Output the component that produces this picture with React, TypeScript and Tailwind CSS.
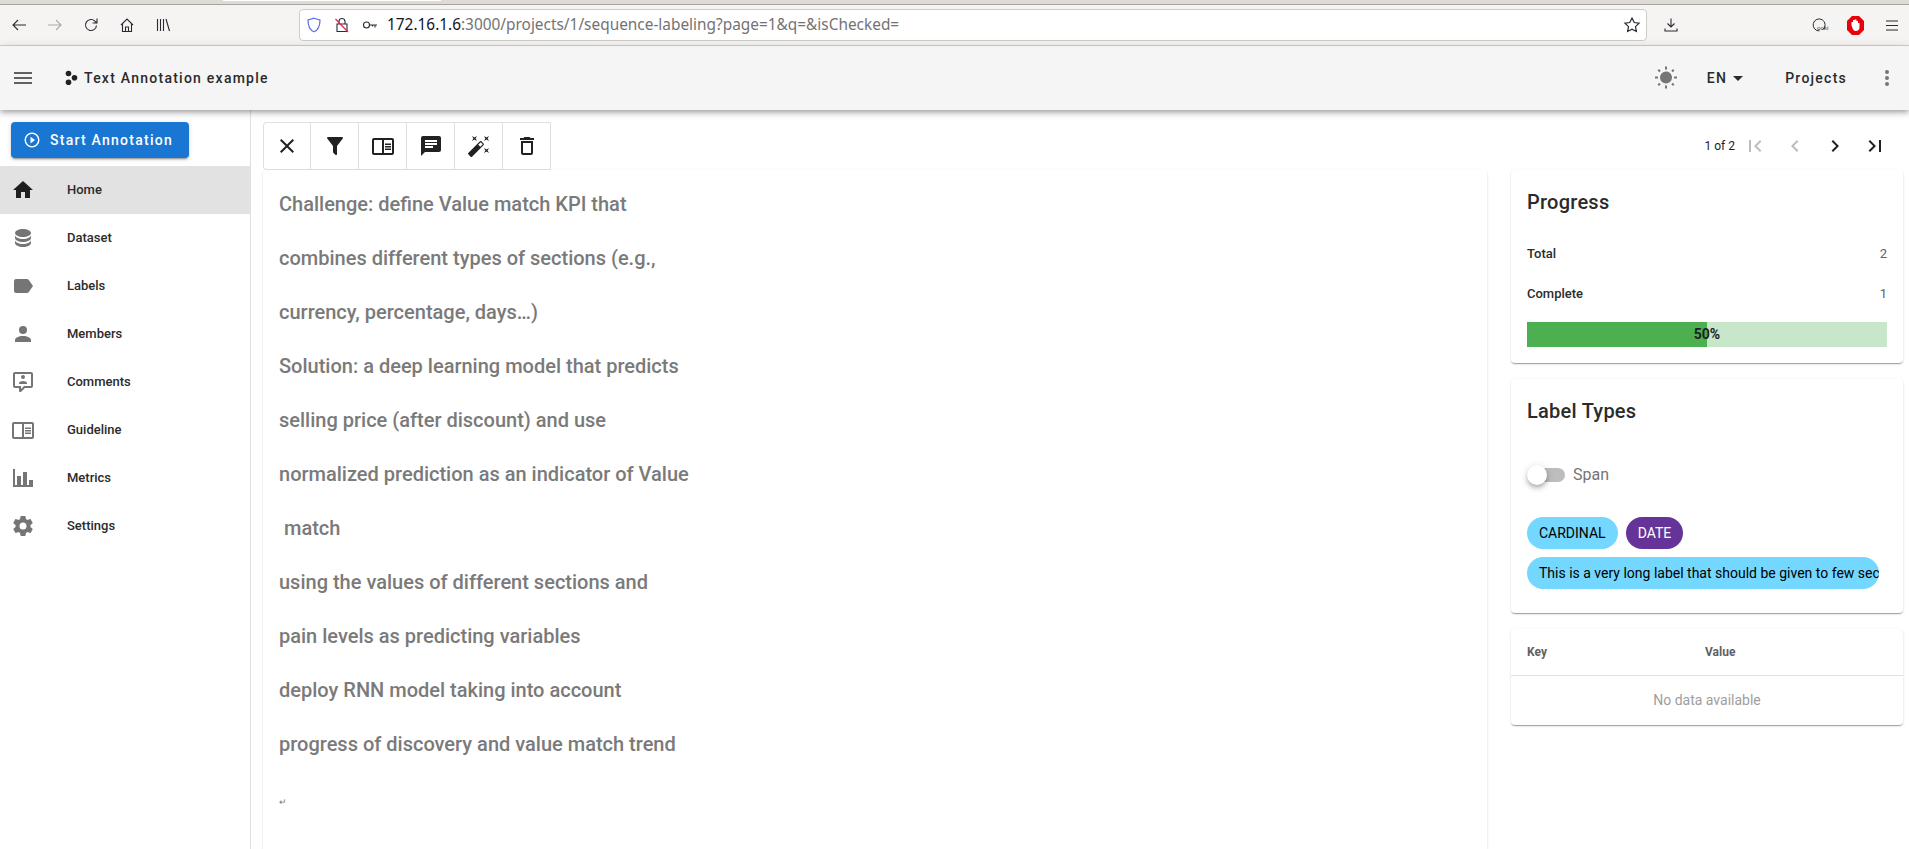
import React from "react";

const P = {
  home: "M10 20v-6h4v6h5v-8h3L12 3 2 12h3v8z",
  database: "M12,3C7.58,3 4,4.79 4,7C4,9.21 7.58,11 12,11C16.42,11 20,9.21 20,7C20,4.79 16.42,3 12,3M4,9V12C4,14.21 7.58,16 12,16C16.42,16 20,14.21 20,12V9C20,11.21 16.42,13 12,13C7.58,13 4,11.21 4,9M4,14V17C4,19.21 7.58,21 12,21C16.42,21 20,19.21 20,17V14C20,16.21 16.42,18 12,18C7.58,18 4,16.21 4,14Z",
  label: "M17.63,5.84C17.27,5.33 16.67,5 16,5H5A2,2 0 0,0 3,7V17A2,2 0 0,0 5,19H16C16.67,19 17.27,18.66 17.63,18.15L22,12L17.63,5.84Z",
  account: "M12,4A4,4 0 0,1 16,8A4,4 0 0,1 12,12A4,4 0 0,1 8,8A4,4 0 0,1 12,4M12,14C16.42,14 20,15.79 20,18V20H4V18C4,15.79 7.58,14 12,14Z",
  comment: "M9,22A1,1 0 0,1 8,21V18H4A2,2 0 0,1 2,16V4C2,2.89 2.9,2 4,2H20A2,2 0 0,1 22,4V16A2,2 0 0,1 20,18H13.9L10.2,21.71C10,21.9 9.75,22 9.5,22V22H9M10,16V19.08L13.08,16H20V4H4V16H10M16,14H8V13C8,11.67 10.67,11 12,11C13.33,11 16,11.67 16,13V14M12,5A2,2 0 0,1 14,7A2,2 0 0,1 12,9A2,2 0 0,1 10,7A2,2 0 0,1 12,5Z",
  book: "M21 4H3A2 2 0 0 0 1 6V19A2 2 0 0 0 3 21H21A2 2 0 0 0 23 19V6A2 2 0 0 0 21 4M3 19V6H11V19H3M21 19H13V6H21V19M14 9.5H20V11H14V9.5M14 12H20V13.5H14V12M14 14.5H20V16H14V14.5Z",
  chart: "M22,21H2V3H4V19H6V10H10V19H12V6H16V19H18V14H22V21Z",
  cog: "M12,15.5A3.5,3.5 0 0,1 8.5,12A3.5,3.5 0 0,1 12,8.5A3.5,3.5 0 0,1 15.5,12A3.5,3.5 0 0,1 12,15.5M19.43,12.97C19.47,12.65 19.5,12.33 19.5,12C19.5,11.67 19.47,11.34 19.43,11L21.54,9.37C21.73,9.22 21.78,8.95 21.66,8.73L19.66,5.27C19.54,5.05 19.27,4.96 19.05,5.05L16.56,6.05C16.04,5.66 15.5,5.32 14.87,5.07L14.5,2.42C14.46,2.18 14.25,2 14,2H10C9.75,2 9.54,2.18 9.5,2.42L9.13,5.07C8.5,5.32 7.96,5.66 7.44,6.05L4.95,5.05C4.73,4.96 4.46,5.05 4.34,5.27L2.34,8.73C2.21,8.95 2.27,9.22 2.46,9.37L4.57,11C4.53,11.34 4.5,11.67 4.5,12C4.5,12.33 4.53,12.65 4.57,12.97L2.46,14.63C2.27,14.78 2.21,15.05 2.34,15.27L4.34,18.73C4.46,18.95 4.73,19.03 4.95,18.95L7.44,17.94C7.96,18.34 8.5,18.68 9.13,18.93L9.5,21.58C9.54,21.82 9.75,22 10,22H14C14.25,22 14.46,21.82 14.5,21.58L14.87,18.93C15.5,18.67 16.04,18.34 16.56,17.94L19.05,18.95C19.27,19.03 19.54,18.95 19.66,18.73L21.66,15.27C21.78,15.05 21.73,14.78 21.54,14.63L19.43,12.97Z",
  close: "M19,6.41L17.59,5L12,10.59L6.41,5L5,6.41L10.59,12L5,17.59L6.41,19L12,13.41L17.59,19L19,17.59L13.41,12L19,6.41Z",
  filter: "M14,12V19.88C14.04,20.18 13.94,20.5 13.71,20.71C13.32,21.1 12.69,21.1 12.3,20.71L10.29,18.7C10.06,18.47 9.96,18.16 10,17.87V12H9.97L4.21,4.62C3.87,4.19 3.95,3.56 4.38,3.22C4.57,3.08 4.78,3 5,3V3H19V3C19.22,3 19.43,3.08 19.62,3.22C20.05,3.56 20.13,4.19 19.79,4.62L14.03,12H14Z",
  message: "M20,2H4A2,2 0 0,0 2,4V22L6,18H20A2,2 0 0,0 22,16V4C22,2.89 21.1,2 20,2M6,9H18V11H6M14,14H6V12H14M18,8H6V6H18",
  wand: "M7.5,5.6L5,7L6.4,4.5L5,2L7.5,3.4L10,2L8.6,4.5L10,7L7.5,5.6M19.5,15.4L22,14L20.6,16.5L22,19L19.5,17.6L17,19L18.4,16.5L17,14L19.5,15.4M22,2L20.6,4.5L22,7L19.5,5.6L17,7L18.4,4.5L17,2L19.5,3.4L22,2M13.34,12.78L15.78,10.34L13.66,8.22L11.22,10.66L13.34,12.78M14.37,7.29L16.71,9.63C17.1,10 17.1,10.65 16.71,11.04L5.04,22.71C4.65,23.1 4,23.1 3.63,22.71L1.29,20.37C0.9,20 0.9,19.35 1.29,18.96L12.96,7.29C13.35,6.9 14,6.9 14.37,7.29Z",
  trash: "M6,19A2,2 0 0,0 8,21H16A2,2 0 0,0 18,19V7H6V19M8,9H16V19H8V9M15.5,4L14.5,3H9.5L8.5,4H5V6H19V4H15.5Z",
  menu: "M3,6H21V8H3V6M3,11H21V13H3V11M3,16H21V18H3V16Z",
  dots: "M12,16A2,2 0 0,1 14,18A2,2 0 0,1 12,20A2,2 0 0,1 10,18A2,2 0 0,1 12,16M12,10A2,2 0 0,1 14,12A2,2 0 0,1 12,14A2,2 0 0,1 10,12A2,2 0 0,1 12,10M12,4A2,2 0 0,1 14,6A2,2 0 0,1 12,8A2,2 0 0,1 10,6A2,2 0 0,1 12,4Z",
  sun: "M3.55 18.54L4.96 19.95L6.76 18.16L5.34 16.74M11 22.45H13V19.5H11M12 5.5A6 6 0 0 0 6 11.5A6 6 0 0 0 12 17.5A6 6 0 0 0 18 11.5C18 8.18 15.31 5.5 12 5.5M20 12.5H23V10.5H20M17.24 18.16L19.04 19.95L20.45 18.54L18.66 16.74M20.45 4.46L19.04 3.05L17.24 4.84L18.66 6.26M13 .55H11V3.5H13M4 10.5H1V12.5H4M6.76 4.84L4.96 3.05L3.55 4.46L5.34 6.26L6.76 4.84Z",
  down: "M7,10L12,15L17,10H7Z",
  play: "M10,16.5L16,12L10,7.5V16.5M12,2A10,10 0 0,0 2,12A10,10 0 0,0 12,22A10,10 0 0,0 22,12A10,10 0 0,0 12,2M12,20C7.59,20 4,16.41 4,12C4,7.59 7.59,4 12,4C16.41,4 20,7.59 20,12C20,16.41 16.41,20 12,20Z",
  left: "M15.41,16.58L10.83,12L15.41,7.41L14,6L8,12L14,18L15.41,16.58Z",
  right: "M8.59,16.58L13.17,12L8.59,7.41L10,6L16,12L10,18L8.59,16.58Z",
  first: "M18.41,16.59L13.82,12L18.41,7.41L17,6L11,12L17,18L18.41,16.59M6,6H8V18H6V6Z",
  last: "M5.59,7.41L10.18,12L5.59,16.59L7,18L13,12L7,6L5.59,7.41M16,6H18V18H16V6Z",
};

function I({ d, size = 24, className = "" }: { d: string; size?: number; className?: string }) {
  return (
    <svg width={size} height={size} viewBox="0 0 24 24" fill="currentColor" className={"shrink-0 " + className}>
      <path d={d} />
    </svg>
  );
}

function B({ children, w = 16 }: { children: React.ReactNode; w?: number }) {
  return (
    <svg width={w} height={w} viewBox="0 0 16 16" fill="none" stroke="#2b2a33" strokeWidth="1.1" className="shrink-0">
      {children}
    </svg>
  );
}

const nav = [
  { t: "Home", d: P.home },
  { t: "Dataset", d: P.database },
  { t: "Labels", d: P.label },
  { t: "Members", d: P.account },
  { t: "Comments", d: P.comment },
  { t: "Guideline", d: P.book },
  { t: "Metrics", d: P.chart },
  { t: "Settings", d: P.cog },
];

const lines = [
  "Challenge: define Value match KPI that",
  "combines different types of sections (e.g.,",
  "currency, percentage, days…)",
  "Solution: a deep learning model that predicts",
  "selling price (after discount) and use",
  "normalized prediction as an indicator of Value",
  " match",
  "using the values of different sections and",
  "pain levels as predicting variables",
  "deploy RNN model taking into account",
  "progress of discovery and value match trend",
];

const card = "bg-white rounded shadow-[0_2px_1px_-1px_rgba(0,0,0,0.2),0_1px_1px_0_rgba(0,0,0,0.14),0_1px_3px_0_rgba(0,0,0,0.12)]";

export default function App() {
  return (
    <div className="h-[849px] w-[1909px] overflow-hidden flex flex-col bg-white font-['Roboto',sans-serif] text-[#2b2b2b]">
      {/* tab strip */}
      <div className="h-[5px] bg-[#dedad6] border-b border-[#a8a5a1] flex shrink-0">
        <div className="ml-[223px] w-[218px] h-[1px] bg-white" />
      </div>

      {/* browser toolbar */}
      <div className="h-[41px] shrink-0 bg-[#f5f4f2] border-b border-[#d2cfcb] flex items-center">
        <div className="flex items-center gap-[20px] pl-[11px] w-[299px]">
          <B><path d="M15 8H2M7 3L2 8l5 5" /></B>
          <B><path d="M1 8h13M9 3l5 5-5 5" stroke="#a9a9ad" /></B>
          <B><path d="M13.5 8.500a5.500 5.500 0 1 1-1.600-4.400L14 6M14 1.500V6H9.600" /></B>
          <B><path d="M2 8l6-6 6 6M3.500 7v7.500h9V7M6.500 14.500V10h3v4.500" /></B>
          <B><path d="M2.500 2v12M5.500 2v12M8.500 2v12M11 2l3.500 12" /></B>
        </div>
        <div className="h-[32px] w-[1348px] bg-white border border-[#cfccc8] rounded flex items-center">
          <div className="flex items-center gap-[12px] pl-[6px]">
            <svg width="16" height="16" viewBox="0 0 16 16" fill="none" stroke="#5a6cf0" strokeWidth="1.2" className="shrink-0">
              <path d="M8 1.200L14 3c0 6-1.500 10-6 11.800C3.500 13 2 9 2 3z" />
            </svg>
            <svg width="16" height="16" viewBox="0 0 16 16" fill="none" stroke="#2b2a33" strokeWidth="1.1" className="shrink-0">
              <path d="M5 7V4.500a3 3 0 0 1 6 0V7M3 7h10v7.500H3z" />
              <path d="M1.500 2L14 15" stroke="#e22850" strokeWidth="1.300" />
            </svg>
            <svg width="16" height="16" viewBox="0 0 16 16" fill="none" stroke="#2b2a33" strokeWidth="1.1" className="shrink-0">
              <circle cx="4.500" cy="8" r="3" />
              <path d="M7.500 8H15M13 8v2.500M10.500 8v1.500" />
            </svg>
          </div>
          <div className="ml-[9px] font-['Noto_Sans',sans-serif] text-[15.4px] text-[#737373] whitespace-nowrap">
            <span className="text-[#15141a]">172.16.1.6</span>:3000/projects/1/sequence-labeling?page=1&amp;q=&amp;isChecked=
          </div>
          <div className="ml-auto mr-[5px] w-[18px] h-[18px] flex items-center justify-center">
            <svg width="18" height="18" viewBox="0 0 18 18" fill="none" stroke="#2b2a33" strokeWidth="1.200">
              <path d="M9 2l2.200 4.500 4.900.7-3.600 3.400.9 4.900L9 13.200l-4.400 2.300.9-4.900L1.900 7.200l4.900-.7z" />
            </svg>
          </div>
        </div>
        <div className="ml-[16px]">
          <B><path d="M8 1.500V10M4.500 6.500L8 10l3.500-3.500M2 11.500v2.500h12v-2.500" /></B>
        </div>
        <div className="ml-auto flex items-center pr-[11px]">
          <div className="relative w-[16px] h-[16px]">
            <svg width="16" height="16" viewBox="0 0 16 16" fill="none" stroke="#2b2a33" strokeWidth="1">
              <path d="M12 12.500a6 6 0 1 0-3.500 1.400" />
            </svg>
            <span className="absolute left-[6px] top-[8px] text-[6px] leading-[6px] text-[#2b2a33]">ooki</span>
          </div>
          <svg width="17" height="19" viewBox="0 0 17 19" className="ml-[20px] shrink-0">
            <path d="M5 0h7l5 5v9l-5 5H5l-5-5V5z" fill="#e8000b" />
            <path d="M4.500 9.500V6h1.500V4h1.500v-.5h2V5H11v2h1.500v4.500c0 2-1.500 3.500-3.500 3.500-2 0-3-1-4.500-5.500z" fill="#fff" />
          </svg>
          <div className="ml-[22px]">
            <svg width="12" height="11" viewBox="0 0 12 11" stroke="#2b2a33" strokeWidth="1.200" className="block">
              <path d="M0 1h12M0 5.500h12M0 10h12" />
            </svg>
          </div>
        </div>
      </div>

      {/* app bar */}
      <header className="h-[64px] shrink-0 z-10 bg-[#f5f5f5] flex items-center shadow-[0_2px_4px_-1px_rgba(0,0,0,0.2),0_4px_5px_0_rgba(0,0,0,0.14),0_1px_10px_0_rgba(0,0,0,0.12)] text-[14px] font-medium tracking-[0.089em] text-[#2b2b2b]">
        <I d={P.menu} className="ml-[11px] text-[#616161]" />
        <svg width="13" height="16" viewBox="0 0 13 16" fill="#212121" className="ml-[30px] shrink-0">
          <circle cx="3.500" cy="3.500" r="2.800" />
          <circle cx="9.500" cy="7.800" r="2.800" />
          <circle cx="3.500" cy="12.300" r="2.800" />
        </svg>
        <span className="ml-[6px]">Text Annotation example</span>
        <div className="ml-auto flex items-center pr-[10px]">
          <I d={P.sun} className="text-[#757575]" />
          <span className="ml-[29px]">EN</span>
          <I d={P.down} className="-ml-[1px]" />
          <span className="ml-[35px] mr-[28px]">Projects</span>
          <I d={P.dots} className="text-[#757575]" />
        </div>
      </header>

      <div className="flex-1 flex min-h-0">
        {/* sidebar */}
        <aside className="w-[251px] shrink-0 border-r border-[#e0e0e0] pt-[12px]">
          <button className="ml-[11px] w-[178px] h-[36px] rounded bg-[#1976d2] text-white text-[14px] font-medium tracking-[0.089em] flex items-center pl-[12px] shadow-[0_3px_1px_-2px_rgba(0,0,0,0.2),0_2px_2px_0_rgba(0,0,0,0.14),0_1px_5px_0_rgba(0,0,0,0.12)]">
            <I d={P.play} size={18} />
            <span className="ml-[9px]">Start Annotation</span>
          </button>
          <nav className="mt-[8px]">
            {nav.map((n, i) => (
              <div key={n.t} className={"h-[48px] flex items-center pl-[11px] text-[13px] font-medium text-[#2b2b2b] " + (i === 0 ? "bg-[#e2e2e2]" : "")}>
                <I d={n.d} className={i === 0 ? "text-[#1f1f1f]" : "text-[#757575]"} />
                <span className="ml-[32px]">{n.t}</span>
              </div>
            ))}
          </nav>
        </aside>

        {/* main */}
        <main className="flex-1 min-w-0 pl-[12px] pr-[6px] pt-[12px] flex flex-col">
          <div className="flex items-center h-[48px] shrink-0">
            <div className="flex h-[48px] border-y border-l border-[#e0e0e0] rounded-l text-[#212121]">
              {[P.close, P.filter, P.book, P.message, P.wand, P.trash].map((d, i) => (
                <div key={i} className={(i === 0 ? "w-[47px]" : "w-[48px]") + " border-r border-[#e0e0e0] flex items-center justify-center"}>
                  <I d={d} />
                </div>
              ))}
            </div>
            <div className="ml-auto flex items-center pr-[16px]">
              <span className="text-[12px] text-[#212121] mr-[8px]">1 of 2</span>
              <I d={P.first} className="text-[#bdbdbd] mr-[16px]" />
              <I d={P.left} className="text-[#bdbdbd] mr-[16px]" />
              <I d={P.right} className="text-[#212121] mr-[16px]" />
              <I d={P.last} className="text-[#212121]" />
            </div>
          </div>

          <div className="flex-1 flex gap-[24px] min-h-0">
            <div className={card + " w-[1224px] shrink-0 rounded-b-none pt-[7px] pl-[16px] text-[20px] font-medium text-[#7a7a7a]"}>
              {lines.map((l) => (
                <div key={l} className="h-[54px] leading-[54px] whitespace-pre">{l}</div>
              ))}
              <div className="h-[54px] leading-[62px] text-[9px]">↵</div>
            </div>

            <div className="w-[392px] shrink-0 flex flex-col gap-[16px]">
              <section className={card + " p-[16px]"}>
                <h2 className="h-[32px] leading-[32px] text-[20px] font-medium tracking-[0.0125em]">Progress</h2>
                <div className="mt-[16px] text-[13px] font-medium">
                  <div className="h-[40px] flex items-center justify-between">
                    <span>Total</span>
                    <span className="font-normal text-[#616161]">2</span>
                  </div>
                  <div className="h-[40px] flex items-center justify-between">
                    <span>Complete</span>
                    <span className="font-normal text-[#616161]">1</span>
                  </div>
                </div>
                <div className="relative mt-[8px] h-[25px] bg-[#c8e6c9]">
                  <div className="h-full w-1/2 bg-[#4caf50]" />
                  <div className="absolute inset-0 flex items-center justify-center text-[14px] font-bold text-[#212121]">50%</div>
                </div>
              </section>

              <section className={card + " p-[16px] pb-[24px]"}>
                <h2 className="h-[32px] leading-[32px] text-[20px] font-medium tracking-[0.0125em]">Label Types</h2>
                <div className="mt-[32px] h-[32px] flex items-center">
                  <div className="relative w-[36px] h-[14px] ml-[2px] rounded-full bg-[#bdbdbd]">
                    <div className="absolute -left-[2px] -top-[3px] w-[20px] h-[20px] rounded-full bg-white shadow-[0_2px_4px_-1px_rgba(0,0,0,0.2),0_4px_5px_0_rgba(0,0,0,0.14),0_1px_10px_0_rgba(0,0,0,0.12)]" />
                  </div>
                  <span className="ml-[8px] text-[16px] text-[#757575]">Span</span>
                </div>
                <div className="mt-[26px] flex gap-[8px] text-[14px]">
                  <span className="h-[32px] leading-[32px] px-[12px] rounded-full bg-[#73d7ff] text-black">CARDINAL</span>
                  <span className="h-[32px] leading-[32px] px-[12px] rounded-full bg-[#663399] text-white">DATE</span>
                </div>
                <div className="mt-[8px] w-[352px] h-[32px] leading-[32px] pl-[12px] rounded-full bg-[#73d7ff] text-black text-[14px] overflow-hidden whitespace-nowrap">
                  This is a very long label that should be given to few sections
                </div>
              </section>

              <section className={card}>
                <div className="h-[47px] border-b border-[#e0e0e0] flex items-center text-[12px] font-bold text-[#616161]">
                  <span className="pl-[16px] w-[194px]">Key</span>
                  <span>Value</span>
                </div>
                <div className="h-[49px] flex items-center justify-center text-[14px] text-[#9e9e9e]">No data available</div>
              </section>
            </div>
          </div>
        </main>
      </div>
    </div>
  );
}
